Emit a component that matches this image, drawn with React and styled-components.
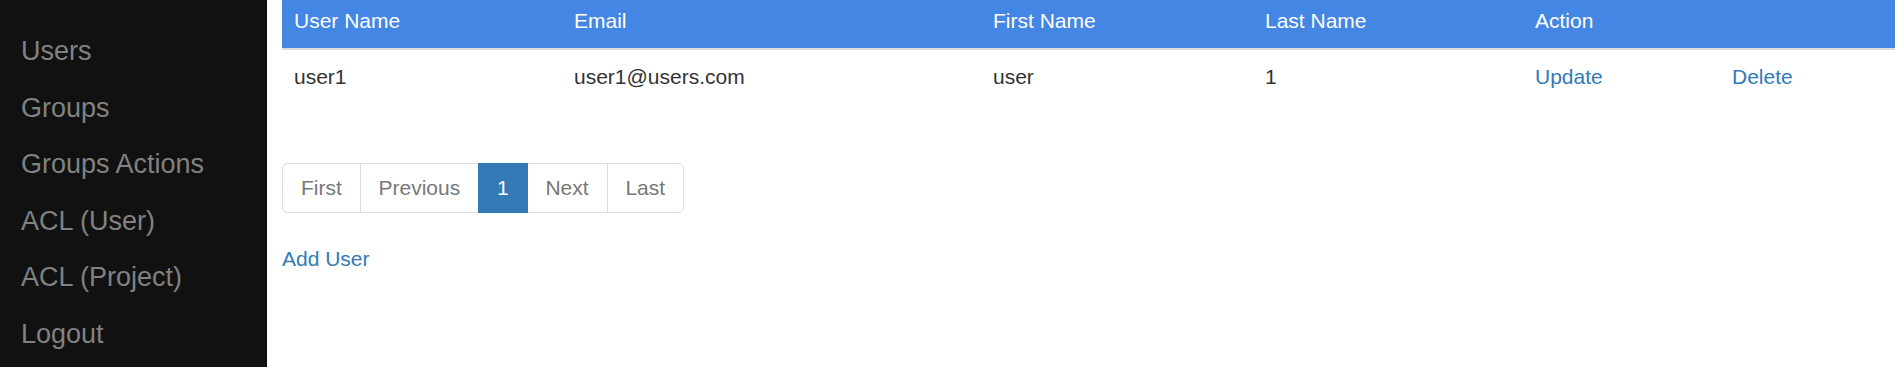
import React from "react";
import styled, { createGlobalStyle } from "styled-components";

const GlobalStyle = createGlobalStyle`
  html, body {
    margin: 0;
    padding: 0;
    background: #fff;
    font-family: "Liberation Sans", Arial, Helvetica, sans-serif;
    color: #333;
    overflow: hidden;
  }
`;

const users = [
  { userName: "user1", email: "user1@users.com", firstName: "user", lastName: "1" },
];

const menu = ["Users", "Groups", "Groups Actions", "ACL (User)", "ACL (Project)", "Logout"];
const pages = [
  { label: "First" },
  { label: "Previous" },
  { label: "1", active: true },
  { label: "Next" },
  { label: "Last" },
];

function App() {
  return (
    <>
      <GlobalStyle />
      <Layout>
        <SideNav>
          {menu.map((item) => (
            <NavLink key={item} href="#">
              {item}
            </NavLink>
          ))}
        </SideNav>
        <Main>
          <Table>
            <colgroup>
              <col style={{ width: 280 }} />
              <col style={{ width: 419 }} />
              <col style={{ width: 272 }} />
              <col style={{ width: 270 }} />
              <col style={{ width: 197 }} />
              <col />
            </colgroup>
            <thead>
              <tr>
                <Th>User Name</Th>
                <Th>Email</Th>
                <Th>First Name</Th>
                <Th>Last Name</Th>
                <Th colSpan={2}>Action</Th>
              </tr>
            </thead>
            <tbody>
              {users.map((u) => (
                <tr key={u.userName}>
                  <Td>{u.userName}</Td>
                  <Td>{u.email}</Td>
                  <Td>{u.firstName}</Td>
                  <Td>{u.lastName}</Td>
                  <Td>
                    <Link href="#">Update</Link>
                  </Td>
                  <Td>
                    <Link href="#">Delete</Link>
                  </Td>
                </tr>
              ))}
            </tbody>
          </Table>
          <Pagination>
            {pages.map((p) => (
              <PageItem key={p.label} $active={p.active}>
                {p.label}
              </PageItem>
            ))}
          </Pagination>
          <AddLink href="#">Add User</AddLink>
        </Main>
      </Layout>
    </>
  );
}

export default App;

const Layout = styled.div`
  display: flex;
  min-height: 100vh;
`;

const SideNav = styled.nav`
  width: 267px;
  flex-shrink: 0;
  background: #111;
  padding-top: 23px;
  display: flex;
  flex-direction: column;
`;

const NavLink = styled.a`
  display: block;
  padding: 12px 0 12px 21px;
  font-size: 27px;
  line-height: 32.5px;
  color: #818181;
  text-decoration: none;
`;

const Main = styled.main`
  flex: 1;
  padding-left: 15px;
  display: flex;
  flex-direction: column;
  align-items: flex-start;
  min-width: 0;
`;

const Table = styled.table`
  width: 100%;
  border-collapse: collapse;
  table-layout: fixed;
  font-size: 21px;
  line-height: 30px;
  margin-bottom: 59px;
`;

const Th = styled.th`
  background: #4486e4;
  color: #fff;
  font-weight: normal;
  text-align: left;
  padding: 6px 12px 12px;
  border-bottom: 2px solid #ddd;
`;

const Td = styled.td`
  padding: 12px;
  text-align: left;
  color: #333;
`;

const Link = styled.a`
  color: #337ab7;
  text-decoration: none;
`;

const Pagination = styled.ul`
  display: flex;
  list-style: none;
  margin: 0 0 31px;
  padding: 0;
  font-size: 21px;
`;

const PageItem = styled.li`
  padding: 9px 17.9px 10px;
  line-height: 29px;
  margin-left: -1px;
  border: 1px solid ${(p) => (p.$active ? "#337ab7" : "#ddd")};
  background: ${(p) => (p.$active ? "#337ab7" : "#fff")};
  color: ${(p) => (p.$active ? "#fff" : "#777")};
  position: relative;
  z-index: ${(p) => (p.$active ? 2 : 1)};

  &:first-child {
    margin-left: 0;
    border-radius: 6px 0 0 6px;
  }
  &:last-child {
    border-radius: 0 6px 6px 0;
  }
`;

const AddLink = styled.a`
  font-size: 21px;
  line-height: 30px;
  color: #337ab7;
  text-decoration: none;
`;
